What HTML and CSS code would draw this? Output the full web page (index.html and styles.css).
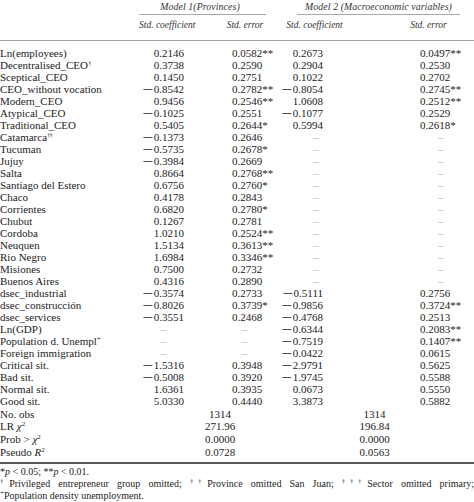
FILE: index.html
```html
<!DOCTYPE html>
<html>
<head>
<meta charset="utf-8">
<link rel="stylesheet" href="styles.css">
</head>
<body>
<table class="tbl">
<colgroup>
<col class="c0"><col class="c1"><col class="c2"><col class="cs"><col class="c3"><col class="c4">
</colgroup>
<thead>
<tr class="hr1">
<th></th>
<th colspan="2" class="model"><div class="mline m1">Model 1(Provinces)</div></th>
<th></th>
<th colspan="2" class="model"><div class="mline m2">Model 2 (Macroeconomic variables)</div></th>
</tr>
<tr class="hr2">
<th></th>
<th class="sub s1">Std. coefficient</th>
<th class="sub s2">Std. error</th>
<th></th>
<th class="sub s3">Std. coefficient</th>
<th class="sub s4">Std. error</th>
</tr>
</thead>
<tbody class="body">
<tr class="first"><td class="lab">Ln(employees)</td><td class="v1">0.2146</td><td class="v2">0.0582**</td><td></td><td class="v3">0.2673</td><td class="v4">0.0497**</td></tr>
<tr><td class="lab">Decentralised_CEO<sup>†</sup></td><td class="v1">0.3738</td><td class="v2">0.2590</td><td></td><td class="v3">0.2904</td><td class="v4">0.2530</td></tr>
<tr><td class="lab">Sceptical_CEO</td><td class="v1">0.1450</td><td class="v2">0.2751</td><td></td><td class="v3">0.1022</td><td class="v4">0.2702</td></tr>
<tr><td class="lab">CEO_without vocation</td><td class="v1"><span class="m">−</span>0.8542</td><td class="v2">0.2782**</td><td></td><td class="v3"><span class="m">−</span>0.8054</td><td class="v4">0.2745**</td></tr>
<tr><td class="lab">Modern_CEO</td><td class="v1">0.9456</td><td class="v2">0.2546**</td><td></td><td class="v3">1.0608</td><td class="v4">0.2512**</td></tr>
<tr><td class="lab">Atypical_CEO</td><td class="v1"><span class="m">−</span>0.1025</td><td class="v2">0.2551</td><td></td><td class="v3"><span class="m">−</span>0.1077</td><td class="v4">0.2529</td></tr>
<tr><td class="lab">Traditional_CEO</td><td class="v1">0.5405</td><td class="v2">0.2644*</td><td></td><td class="v3">0.5994</td><td class="v4">0.2618*</td></tr>
<tr><td class="lab">Catamarca<sup class="dg">††</sup></td><td class="v1"><span class="m">−</span>0.1373</td><td class="v2">0.2646</td><td></td><td class="d3">–</td><td class="d4">–</td></tr>
<tr><td class="lab">Tucuman</td><td class="v1"><span class="m">−</span>0.5735</td><td class="v2">0.2678*</td><td></td><td class="d3">–</td><td class="d4">–</td></tr>
<tr><td class="lab">Jujuy</td><td class="v1"><span class="m">−</span>0.3984</td><td class="v2">0.2669</td><td></td><td class="d3">–</td><td class="d4">–</td></tr>
<tr><td class="lab">Salta</td><td class="v1">0.8664</td><td class="v2">0.2768**</td><td></td><td class="d3">–</td><td class="d4">–</td></tr>
<tr><td class="lab">Santiago del Estero</td><td class="v1">0.6756</td><td class="v2">0.2760*</td><td></td><td class="d3">–</td><td class="d4">–</td></tr>
<tr><td class="lab">Chaco</td><td class="v1">0.4178</td><td class="v2">0.2843</td><td></td><td class="d3">–</td><td class="d4">–</td></tr>
<tr><td class="lab">Corrientes</td><td class="v1">0.6820</td><td class="v2">0.2780*</td><td></td><td class="d3">–</td><td class="d4">–</td></tr>
<tr><td class="lab">Chubut</td><td class="v1">0.1267</td><td class="v2">0.2781</td><td></td><td class="d3">–</td><td class="d4">–</td></tr>
<tr><td class="lab">Cordoba</td><td class="v1">1.0210</td><td class="v2">0.2524**</td><td></td><td class="d3">–</td><td class="d4">–</td></tr>
<tr><td class="lab">Neuquen</td><td class="v1">1.5134</td><td class="v2">0.3613**</td><td></td><td class="d3">–</td><td class="d4">–</td></tr>
<tr><td class="lab">Rio Negro</td><td class="v1">1.6984</td><td class="v2">0.3346**</td><td></td><td class="d3">–</td><td class="d4">–</td></tr>
<tr><td class="lab">Misiones</td><td class="v1">0.7500</td><td class="v2">0.2732</td><td></td><td class="d3">–</td><td class="d4">–</td></tr>
<tr><td class="lab">Buenos Aires</td><td class="v1">0.4316</td><td class="v2">0.2890</td><td></td><td class="d3">–</td><td class="d4">–</td></tr>
<tr><td class="lab">dsec_industrial</td><td class="v1"><span class="m">−</span>0.3574</td><td class="v2">0.2733</td><td></td><td class="v3"><span class="m">−</span>0.5111</td><td class="v4">0.2756</td></tr>
<tr><td class="lab">dsec_construcción</td><td class="v1"><span class="m">−</span>0.8026</td><td class="v2">0.3739*</td><td></td><td class="v3"><span class="m">−</span>0.9856</td><td class="v4">0.3724**</td></tr>
<tr><td class="lab">dsec_services</td><td class="v1"><span class="m">−</span>0.3551</td><td class="v2">0.2468</td><td></td><td class="v3"><span class="m">−</span>0.4768</td><td class="v4">0.2513</td></tr>
<tr><td class="lab">Ln(GDP)</td><td class="d1">–</td><td class="d2">–</td><td></td><td class="v3"><span class="m">−</span>0.6344</td><td class="v4">0.2083**</td></tr>
<tr><td class="lab">Population d. Unempl<sup>+</sup></td><td class="d1">–</td><td class="d2">–</td><td></td><td class="v3"><span class="m">−</span>0.7519</td><td class="v4">0.1407**</td></tr>
<tr><td class="lab">Foreign immigration</td><td class="d1">–</td><td class="d2">–</td><td></td><td class="v3"><span class="m">−</span>0.0422</td><td class="v4">0.0615</td></tr>
<tr><td class="lab">Critical sit.</td><td class="v1"><span class="m">−</span>1.5316</td><td class="v2">0.3948</td><td></td><td class="v3"><span class="m">−</span>2.9791</td><td class="v4">0.5625</td></tr>
<tr><td class="lab">Bad sit.</td><td class="v1"><span class="m">−</span>0.5008</td><td class="v2">0.3920</td><td></td><td class="v3"><span class="m">−</span>1.9745</td><td class="v4">0.5588</td></tr>
<tr><td class="lab">Normal sit.</td><td class="v1">1.6361</td><td class="v2">0.3935</td><td></td><td class="v3">0.0673</td><td class="v4">0.5550</td></tr>
<tr><td class="lab">Good sit.</td><td class="v1">5.0330</td><td class="v2">0.4440</td><td></td><td class="v3">3.3873</td><td class="v4">0.5882</td></tr>
</tbody>
<tbody class="stats">
<tr><td class="lab">No. obs</td><td colspan="2" class="st1">1314</td><td></td><td colspan="2" class="st2">1314</td></tr>
<tr><td class="lab">LR <i>χ</i><sup>2</sup></td><td colspan="2" class="st1">271.96</td><td></td><td colspan="2" class="st2">196.84</td></tr>
<tr><td class="lab">Prob &gt; <i>χ</i><sup>2</sup></td><td colspan="2" class="st1">0.0000</td><td></td><td colspan="2" class="st2">0.0000</td></tr>
<tr class="last"><td class="lab">Pseudo <i>R</i><sup>2</sup></td><td colspan="2" class="st1">0.0728</td><td></td><td colspan="2" class="st2">0.0563</td></tr>
</tbody>
</table>
<div class="notes">
<div class="note">*<i>p</i> &lt; 0.05; **<i>p</i> &lt; 0.01.</div>
<div class="note just"><sup class="dg">†</sup>Privileged entrepreneur group omitted; <sup class="dg">††</sup>Province omitted San Juan; <sup class="dg">†††</sup>Sector omitted primary;</div>
<div class="note"><sup>+</sup>Population density unemployment.</div>
</div>
</body>
</html>
```

FILE: styles.css
```css
html, body {
  margin: 0;
  padding: 0;
  background: #ffffff;
}
body {
  width: 474px;
  overflow: hidden;
  font-family: "Liberation Serif", "Times New Roman", serif;
  color: #1c1c1c;
}
.tbl {
  border-collapse: collapse;
  table-layout: fixed;
  width: 474px;
  font-size: 11px;
  font-family: "Liberation Serif", "Times New Roman", serif;
}
.c0 { width: 139px; }
.c1 { width: 66px; }
.c2 { width: 61px; }
.cs { width: 9px; }
.c3 { width: 95px; }
.c4 { width: 104px; }

th {
  font-weight: normal;
  padding: 0;
  white-space: nowrap;
}
td {
  padding: 0;
  white-space: nowrap;
}
.hr1 th {
  height: 15px;
  vertical-align: top;
}
.model {
  font-style: italic;
  font-size: 9.8px;
  color: #333333;
  letter-spacing: 0.1px;
}
.mline {
  height: 13.5px;
  line-height: 13px;
  text-align: center;
  border-bottom: 1.5px solid #a8a8a8;
}
.m1 { padding-right: 5px; }
.m2 { margin-left: 22px; margin-right: 14px; }

.hr2 th {
  height: 25px;
  vertical-align: middle;
  padding-bottom: 4px;
  box-sizing: border-box;
  border-bottom: 1px solid #a0a0a0;
}
.sub {
  font-style: italic;
  font-size: 9.5px;
  color: #333333;
}
.s1 { text-align: center; padding-right: 12px; }
.s2 { text-align: center; padding-left: 19px; }
.s3 { text-align: center; padding-right: 16px; }
.s4 { text-align: center; padding-left: 13px; }

.body td {
  line-height: 12px;
  height: 12px;
}
.body .first td {
  padding-top: 6px;
}
.lab {
  text-align: left;
}
.v1 { text-align: right; padding-right: 21px; }
.v2 { text-align: left; padding-left: 27px; }
.v3 { text-align: right; padding-right: 47px; }
.v4 { text-align: left; padding-left: 50px; }

.d1, .d2, .d3, .d4 { color: #b0b0b0; }
.d1 { text-align: right; padding-right: 39px; }
.d2 { text-align: left; padding-left: 37px; }
.d3 { text-align: right; padding-right: 51px; }
.d4 { text-align: left; padding-left: 68px; }

.m {
  display: inline-block;
  width: 12px;
  text-align: left;
  transform: scaleX(1.75);
  transform-origin: left center;
}

sup {
  font-size: 7px;
  line-height: 0;
  vertical-align: 4px;
}
.dg {
  letter-spacing: -1px;
  margin-right: 1px;
}

.stats td {
  line-height: 12.8px;
  height: 12.8px;
}
.stats tr:first-child td {
  padding-top: 1px;
}
.st1 { text-align: center; padding-left: 35px; }
.st2 { text-align: center; }
.stats .last td {
  padding-bottom: 3px;
  border-bottom: 2.5px solid #5a5a5a;
}

.notes {
  font-size: 10px;
  line-height: 12px;
  padding-top: 2px;
}
.note {
  white-space: nowrap;
}
.just {
  white-space: normal;
  text-align: justify;
  text-align-last: justify;
}
```
